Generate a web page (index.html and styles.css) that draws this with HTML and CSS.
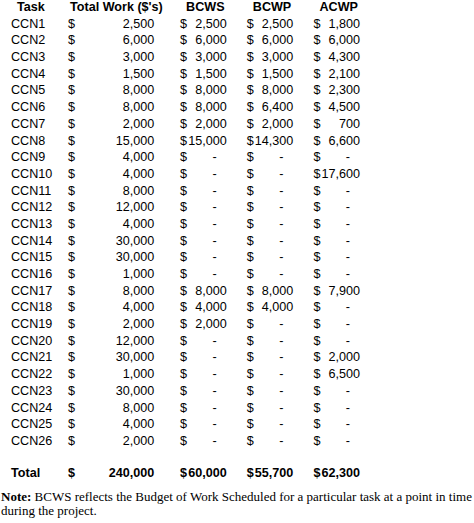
FILE: index.html
```html
<!DOCTYPE html>
<html>
<head>
<meta charset="utf-8">
<link rel="stylesheet" href="styles.css">
</head>
<body>
<div class="sheet">
  <div class="grid">
    <div class="row head">
      <div class="c task">Task</div>
      <div class="c tw">Total Work ($'s)</div>
      <div class="c m">BCWS</div>
      <div class="c m">BCWP</div>
      <div class="c m last">ACWP</div>
    </div>
    <div class="row"><div class="c task">CCN1</div><div class="c tw"><span>$</span><span>2,500</span></div><div class="c m"><span>$</span><span>2,500</span></div><div class="c m"><span>$</span><span>2,500</span></div><div class="c m last"><span>$</span><span>1,800</span></div></div>
    <div class="row"><div class="c task">CCN2</div><div class="c tw"><span>$</span><span>6,000</span></div><div class="c m"><span>$</span><span>6,000</span></div><div class="c m"><span>$</span><span>6,000</span></div><div class="c m last"><span>$</span><span>6,000</span></div></div>
    <div class="row"><div class="c task">CCN3</div><div class="c tw"><span>$</span><span>3,000</span></div><div class="c m"><span>$</span><span>3,000</span></div><div class="c m"><span>$</span><span>3,000</span></div><div class="c m last"><span>$</span><span>4,300</span></div></div>
    <div class="row"><div class="c task">CCN4</div><div class="c tw"><span>$</span><span>1,500</span></div><div class="c m"><span>$</span><span>1,500</span></div><div class="c m"><span>$</span><span>1,500</span></div><div class="c m last"><span>$</span><span>2,100</span></div></div>
    <div class="row"><div class="c task">CCN5</div><div class="c tw"><span>$</span><span>8,000</span></div><div class="c m"><span>$</span><span>8,000</span></div><div class="c m"><span>$</span><span>8,000</span></div><div class="c m last"><span>$</span><span>2,300</span></div></div>
    <div class="row"><div class="c task">CCN6</div><div class="c tw"><span>$</span><span>8,000</span></div><div class="c m"><span>$</span><span>8,000</span></div><div class="c m"><span>$</span><span>6,400</span></div><div class="c m last"><span>$</span><span>4,500</span></div></div>
    <div class="row"><div class="c task">CCN7</div><div class="c tw"><span>$</span><span>2,000</span></div><div class="c m"><span>$</span><span>2,000</span></div><div class="c m"><span>$</span><span>2,000</span></div><div class="c m last"><span>$</span><span>700</span></div></div>
    <div class="row"><div class="c task">CCN8</div><div class="c tw"><span>$</span><span>15,000</span></div><div class="c m"><span>$</span><span>15,000</span></div><div class="c m"><span>$</span><span>14,300</span></div><div class="c m last"><span>$</span><span>6,600</span></div></div>
    <div class="row"><div class="c task">CCN9</div><div class="c tw"><span>$</span><span>4,000</span></div><div class="c m"><span>$</span><span class="dash">-</span></div><div class="c m"><span>$</span><span class="dash">-</span></div><div class="c m last"><span>$</span><span class="dash">-</span></div></div>
    <div class="row"><div class="c task">CCN10</div><div class="c tw"><span>$</span><span>4,000</span></div><div class="c m"><span>$</span><span class="dash">-</span></div><div class="c m"><span>$</span><span class="dash">-</span></div><div class="c m last"><span>$</span><span>17,600</span></div></div>
    <div class="row"><div class="c task">CCN11</div><div class="c tw"><span>$</span><span>8,000</span></div><div class="c m"><span>$</span><span class="dash">-</span></div><div class="c m"><span>$</span><span class="dash">-</span></div><div class="c m last"><span>$</span><span class="dash">-</span></div></div>
    <div class="row"><div class="c task">CCN12</div><div class="c tw"><span>$</span><span>12,000</span></div><div class="c m"><span>$</span><span class="dash">-</span></div><div class="c m"><span>$</span><span class="dash">-</span></div><div class="c m last"><span>$</span><span class="dash">-</span></div></div>
    <div class="row"><div class="c task">CCN13</div><div class="c tw"><span>$</span><span>4,000</span></div><div class="c m"><span>$</span><span class="dash">-</span></div><div class="c m"><span>$</span><span class="dash">-</span></div><div class="c m last"><span>$</span><span class="dash">-</span></div></div>
    <div class="row"><div class="c task">CCN14</div><div class="c tw"><span>$</span><span>30,000</span></div><div class="c m"><span>$</span><span class="dash">-</span></div><div class="c m"><span>$</span><span class="dash">-</span></div><div class="c m last"><span>$</span><span class="dash">-</span></div></div>
    <div class="row"><div class="c task">CCN15</div><div class="c tw"><span>$</span><span>30,000</span></div><div class="c m"><span>$</span><span class="dash">-</span></div><div class="c m"><span>$</span><span class="dash">-</span></div><div class="c m last"><span>$</span><span class="dash">-</span></div></div>
    <div class="row"><div class="c task">CCN16</div><div class="c tw"><span>$</span><span>1,000</span></div><div class="c m"><span>$</span><span class="dash">-</span></div><div class="c m"><span>$</span><span class="dash">-</span></div><div class="c m last"><span>$</span><span class="dash">-</span></div></div>
    <div class="row"><div class="c task">CCN17</div><div class="c tw"><span>$</span><span>8,000</span></div><div class="c m"><span>$</span><span>8,000</span></div><div class="c m"><span>$</span><span>8,000</span></div><div class="c m last"><span>$</span><span>7,900</span></div></div>
    <div class="row"><div class="c task">CCN18</div><div class="c tw"><span>$</span><span>4,000</span></div><div class="c m"><span>$</span><span>4,000</span></div><div class="c m"><span>$</span><span>4,000</span></div><div class="c m last"><span>$</span><span class="dash">-</span></div></div>
    <div class="row"><div class="c task">CCN19</div><div class="c tw"><span>$</span><span>2,000</span></div><div class="c m"><span>$</span><span>2,000</span></div><div class="c m"><span>$</span><span class="dash">-</span></div><div class="c m last"><span>$</span><span class="dash">-</span></div></div>
    <div class="row"><div class="c task">CCN20</div><div class="c tw"><span>$</span><span>12,000</span></div><div class="c m"><span>$</span><span class="dash">-</span></div><div class="c m"><span>$</span><span class="dash">-</span></div><div class="c m last"><span>$</span><span class="dash">-</span></div></div>
    <div class="row"><div class="c task">CCN21</div><div class="c tw"><span>$</span><span>30,000</span></div><div class="c m"><span>$</span><span class="dash">-</span></div><div class="c m"><span>$</span><span class="dash">-</span></div><div class="c m last"><span>$</span><span>2,000</span></div></div>
    <div class="row"><div class="c task">CCN22</div><div class="c tw"><span>$</span><span>1,000</span></div><div class="c m"><span>$</span><span class="dash">-</span></div><div class="c m"><span>$</span><span class="dash">-</span></div><div class="c m last"><span>$</span><span>6,500</span></div></div>
    <div class="row"><div class="c task">CCN23</div><div class="c tw"><span>$</span><span>30,000</span></div><div class="c m"><span>$</span><span class="dash">-</span></div><div class="c m"><span>$</span><span class="dash">-</span></div><div class="c m last"><span>$</span><span class="dash">-</span></div></div>
    <div class="row"><div class="c task">CCN24</div><div class="c tw"><span>$</span><span>8,000</span></div><div class="c m"><span>$</span><span class="dash">-</span></div><div class="c m"><span>$</span><span class="dash">-</span></div><div class="c m last"><span>$</span><span class="dash">-</span></div></div>
    <div class="row"><div class="c task">CCN25</div><div class="c tw"><span>$</span><span>4,000</span></div><div class="c m"><span>$</span><span class="dash">-</span></div><div class="c m"><span>$</span><span class="dash">-</span></div><div class="c m last"><span>$</span><span class="dash">-</span></div></div>
    <div class="row"><div class="c task">CCN26</div><div class="c tw"><span>$</span><span>2,000</span></div><div class="c m"><span>$</span><span class="dash">-</span></div><div class="c m"><span>$</span><span class="dash">-</span></div><div class="c m last"><span>$</span><span class="dash">-</span></div></div>
    <div class="row total"><div class="c task">Total</div><div class="c tw"><span>$</span><span>240,000</span></div><div class="c m"><span>$</span><span>60,000</span></div><div class="c m"><span>$</span><span>55,700</span></div><div class="c m last"><span>$</span><span>62,300</span></div></div>
  </div>
  <p class="note"><b>Note:</b> BCWS reflects the Budget of Work Scheduled for a particular task at a point in time during the project.</p>
</div>
</body>
</html>
```
FILE: styles.css
```css
html, body {
  margin: 0;
  padding: 0;
  background: #ffffff;
  color: #000000;
}
.sheet {
  width: 474px;
  overflow: hidden;
}
.grid {
  margin-top: -1px;
  font-family: "Liberation Sans", Arial, sans-serif;
  font-size: 12.6px;
}
.row {
  display: grid;
  grid-template-columns: 68px 112px 66.7px 66.7px 46.7px;
  height: 16.7px;
  line-height: 16.7px;
  white-space: nowrap;
}
.c {
  display: flex;
  justify-content: space-between;
}
.task {
  padding-left: 11px;
}
.tw {
  padding-right: 25.7px;
}
.m {
  padding-right: 20px;
}
.m.last {
  padding-right: 0;
}
.dash {
  padding-right: 10px;
}
.head {
  font-weight: bold;
}
.head .task {
  padding-left: 17px;
}
.head .tw {
  padding-left: 2px;
  padding-right: 0;
}
.head .m {
  justify-content: center;
  padding-left: 4px;
}
.total {
  font-weight: bold;
  margin-top: 15.5px;
}
.note {
  margin: 8px 0 0 1px;
  font-family: "Liberation Serif", "Times New Roman", serif;
  font-size: 13px;
  line-height: 14px;
}
```
